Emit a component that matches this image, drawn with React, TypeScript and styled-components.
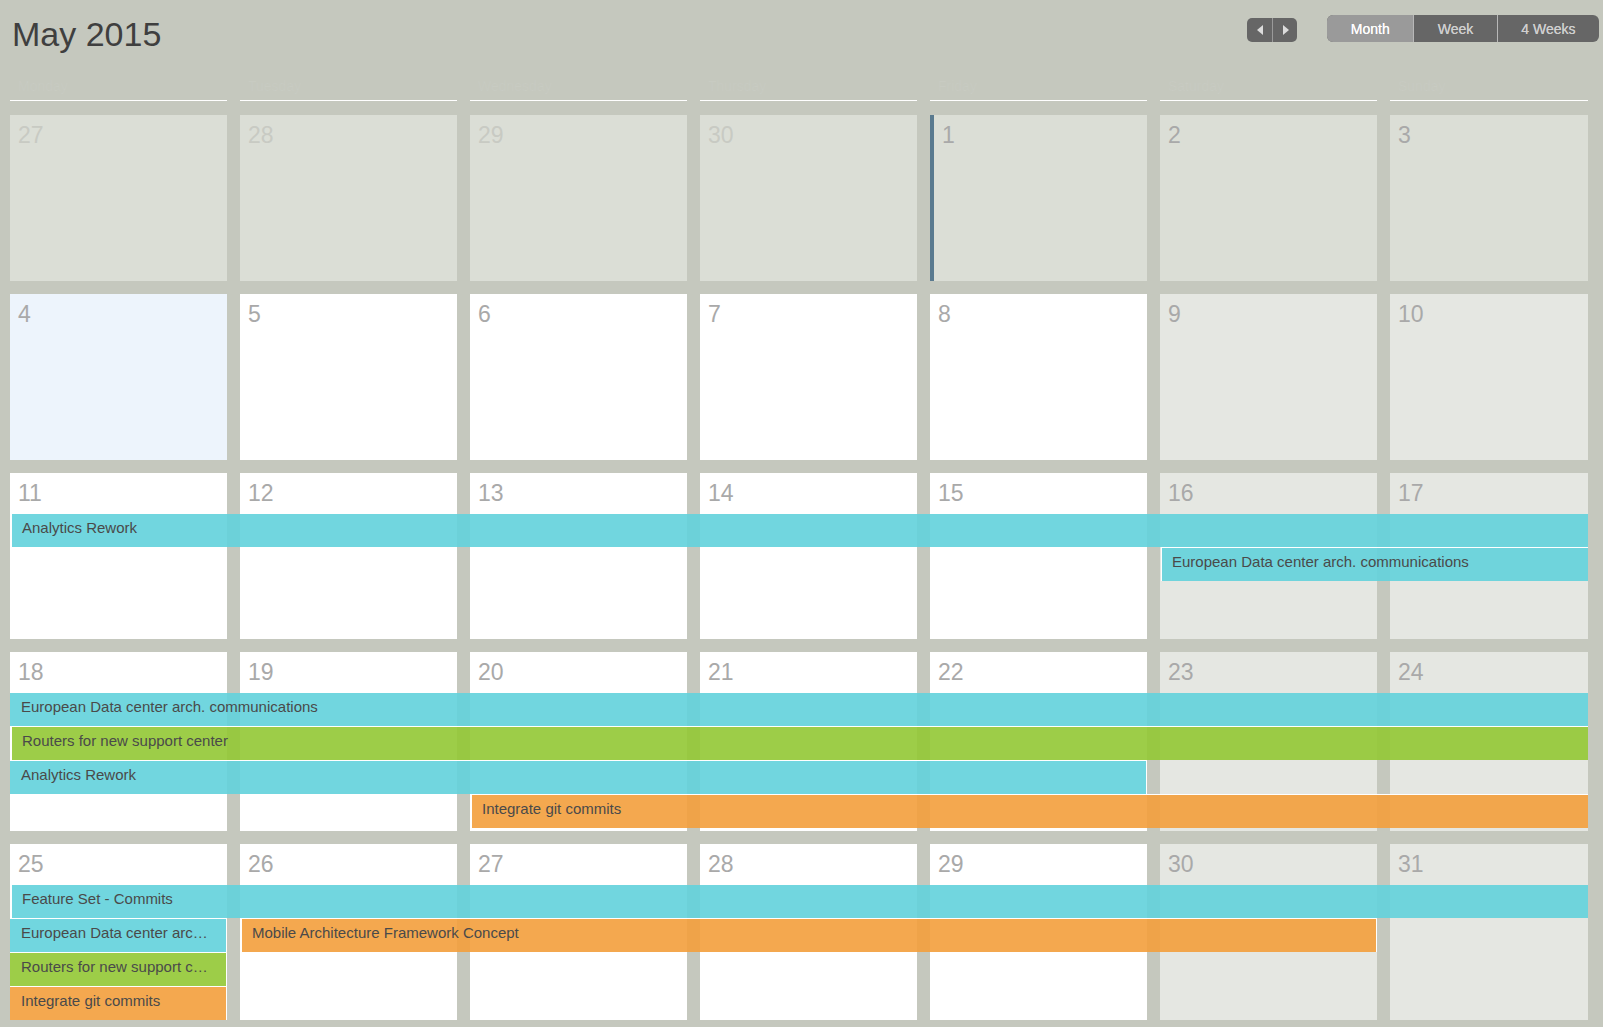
import React from 'react';
import styled, { createGlobalStyle, css } from 'styled-components';

const GlobalStyle = createGlobalStyle`
	body {
		margin: 0;
		background: #c5c8be;
		font-family: 'Liberation Sans', Arial, Helvetica, sans-serif;
	}
`;

const COLUMNS = 'repeat(6, 217px) 198px';

const Page = styled.div`
	padding: 0 4px 7px 10px;
`;

const TopBar = styled.div`
	display: flex;
	justify-content: space-between;
	align-items: flex-start;
	height: 62px;
`;

const Title = styled.h1`
	margin: 14px 0 0 2px;
	font-size: 34px;
	line-height: 40px;
	font-weight: normal;
	color: #3f3f3f;
`;

const Controls = styled.div`
	display: flex;
	align-items: flex-start;
	gap: 30px;
	margin-top: 15px;
`;

const NavGroup = styled.div`
	display: flex;
	margin-top: 3px;
	height: 24px;
	border-radius: 5px;
	overflow: hidden;
	background: #666;
`;

const NavButton = styled.button<{ $dir: 'left' | 'right' }>`
	width: 25px;
	height: 24px;
	padding: 0;
	border: 0;
	background: transparent;
	display: flex;
	align-items: center;
	justify-content: center;
	cursor: pointer;
	${(p) =>
		p.$dir === 'right' &&
		css`
			border-left: 1px solid #9a9a9a;
		`}

	&::before {
		content: '';
		width: 0;
		height: 0;
		border-top: 5px solid transparent;
		border-bottom: 5px solid transparent;
		${(p) =>
			p.$dir === 'left'
				? css`
						border-right: 6px solid #dcdcdc;
						margin-left: 1px;
				  `
				: css`
						border-left: 6px solid #dcdcdc;
						margin-left: 2px;
				  `}
	}
`;

const Switcher = styled.div`
	display: flex;
	height: 27px;
	border-radius: 6px;
	overflow: hidden;
	background: #666;
`;

const SwitchButton = styled.button<{ $active?: boolean }>`
	height: 27px;
	padding: 0 23.5px;
	border: 0;
	font-family: inherit;
	font-size: 14px;
	color: ${(p) => (p.$active ? '#fff' : '#cfcfcf')};
	background: ${(p) => (p.$active ? '#9a9a9a' : 'transparent')};
	text-shadow: 0 0 0.4px currentColor;
	cursor: pointer;

	& + & {
		border-left: 1px solid #b8b8b8;
	}
`;

const DayHeader = styled.div`
	display: grid;
	grid-template-columns: ${COLUMNS};
	column-gap: 13px;
	height: 39px;
`;

const DayName = styled.div`
	display: flex;
	align-items: flex-end;
	padding: 0 0 6px 8px;
	border-bottom: 1px solid #fff;
	font-size: 14px;
	color: rgba(255, 255, 255, 0.06);
`;

const Weeks = styled.div`
	display: flex;
	flex-direction: column;
	gap: 13px;
	margin-top: 14px;
`;

const WeekRow = styled.div<{ $height: number }>`
	position: relative;
	height: ${(p) => p.$height}px;
`;

const DaysGrid = styled.div`
	display: grid;
	grid-template-columns: ${COLUMNS};
	column-gap: 13px;
	height: 100%;
`;

type CellKind = 'past' | 'weekday' | 'weekend' | 'today';

const cellBackgrounds: Record<CellKind, string> = {
	past: '#dbded6',
	weekday: '#ffffff',
	weekend: '#e5e7e2',
	today: '#edf4fc',
};

const DayCell = styled.div<{ $kind: CellKind; $marked?: boolean }>`
	box-sizing: border-box;
	padding: 7px 0 0 8px;
	background: ${(p) => cellBackgrounds[p.$kind]};
	${(p) =>
		p.$marked &&
		css`
			border-left: 4px solid #5a7a8f;
		`}
`;

const DayNumber = styled.span<{ $faded?: boolean }>`
	display: block;
	font-size: 23px;
	line-height: 27px;
	color: ${(p) => (p.$faded ? '#c8cac3' : '#a9a9a9')};
`;

const EventLayer = styled.div`
	position: absolute;
	top: 40px;
	left: 0;
	right: 0;
	display: grid;
	grid-template-columns: ${COLUMNS};
	column-gap: 13px;
	grid-auto-rows: 34px;
`;

type Tone = 'cyan' | 'green' | 'orange';

const tones: Record<Tone, string> = {
	cyan: 'rgba(98, 210, 219, 0.9)',
	green: 'rgba(146, 200, 52, 0.9)',
	orange: 'rgba(243, 158, 60, 0.9)',
};

const EventBar = styled.div<{
	$tone: Tone;
	$from: number;
	$to: number;
	$lane: number;
	$starts?: boolean;
	$ends?: boolean;
}>`
	grid-column: ${(p) => `${p.$from + 1} / ${p.$to + 2}`};
	grid-row: ${(p) => p.$lane};
	box-sizing: border-box;
	height: 34px;
	min-width: 0;
	padding: 0 11px;
	border-top: 1px solid ${(p) => (p.$lane === 1 ? 'transparent' : '#fff')};
	background: ${(p) => tones[p.$tone]};
	background-clip: padding-box;
	font-size: 15px;
	line-height: 28px;
	color: #4a4a4a;
	white-space: nowrap;
	overflow: hidden;
	text-overflow: ellipsis;
	${(p) =>
		p.$starts &&
		css`
			margin-left: 1px;
			border-left: 1px solid #fff;
			padding-left: 10px;
		`}
	${(p) =>
		p.$ends &&
		css`
			border-right: 1px solid #fff;
		`}
`;

type CalEvent = {
	title: string;
	tone: Tone;
	from: number;
	to: number;
	lane: number;
	starts?: boolean;
	ends?: boolean;
};

type Day = { n: number; kind: CellKind; faded?: boolean; marked?: boolean };

type Week = { height: number; days: Day[]; events: CalEvent[] };

const dayNames = ['Monday', 'Tuesday', 'Wednesday', 'Thursday', 'Friday', 'Saturday', 'Sunday'];

const span = (start: number, weekendFrom = 5): Day[] =>
	Array.from({ length: 7 }, (_, i) => ({
		n: start + i,
		kind: i >= weekendFrom ? 'weekend' : 'weekday',
	}));

const weeks: Week[] = [
	{
		height: 166,
		days: [
			{ n: 27, kind: 'past', faded: true },
			{ n: 28, kind: 'past', faded: true },
			{ n: 29, kind: 'past', faded: true },
			{ n: 30, kind: 'past', faded: true },
			{ n: 1, kind: 'past', marked: true },
			{ n: 2, kind: 'past' },
			{ n: 3, kind: 'past' },
		],
		events: [],
	},
	{
		height: 166,
		days: span(4).map((d, i) => (i === 0 ? { ...d, kind: 'today' } : d)),
		events: [],
	},
	{
		height: 166,
		days: span(11),
		events: [
			{ title: 'Analytics Rework', tone: 'cyan', from: 0, to: 6, lane: 1, starts: true },
			{
				title: 'European Data center arch. communications',
				tone: 'cyan',
				from: 5,
				to: 6,
				lane: 2,
				starts: true,
			},
		],
	},
	{
		height: 179,
		days: span(18),
		events: [
			{ title: 'European Data center arch. communications', tone: 'cyan', from: 0, to: 6, lane: 1 },
			{ title: 'Routers for new support center', tone: 'green', from: 0, to: 6, lane: 2, starts: true },
			{ title: 'Analytics Rework', tone: 'cyan', from: 0, to: 4, lane: 3, ends: true },
			{ title: 'Integrate git commits', tone: 'orange', from: 2, to: 6, lane: 4, starts: true },
		],
	},
	{
		height: 176,
		days: span(25),
		events: [
			{ title: 'Feature Set - Commits', tone: 'cyan', from: 0, to: 6, lane: 1, starts: true },
			{ title: 'European Data center arch. communications', tone: 'cyan', from: 0, to: 0, lane: 2, ends: true },
			{ title: 'Routers for new support center', tone: 'green', from: 0, to: 0, lane: 3, ends: true },
			{ title: 'Integrate git commits', tone: 'orange', from: 0, to: 0, lane: 4, ends: true },
			{
				title: 'Mobile Architecture Framework Concept',
				tone: 'orange',
				from: 1,
				to: 5,
				lane: 2,
				starts: true,
				ends: true,
			},
		],
	},
];

const App: React.FC = (): React.ReactElement => {
	return (
		<Page>
			<GlobalStyle />
			<TopBar>
				<Title>May 2015</Title>
				<Controls>
					<NavGroup>
						<NavButton $dir="left" aria-label="Previous" />
						<NavButton $dir="right" aria-label="Next" />
					</NavGroup>
					<Switcher>
						<SwitchButton $active>Month</SwitchButton>
						<SwitchButton>Week</SwitchButton>
						<SwitchButton>4 Weeks</SwitchButton>
					</Switcher>
				</Controls>
			</TopBar>
			<DayHeader>
				{dayNames.map((name) => (
					<DayName key={name}>{name}</DayName>
				))}
			</DayHeader>
			<Weeks>
				{weeks.map((week, w) => (
					<WeekRow key={w} $height={week.height}>
						<DaysGrid>
							{week.days.map((day, i) => (
								<DayCell key={i} $kind={day.kind} $marked={day.marked}>
									<DayNumber $faded={day.faded}>{day.n}</DayNumber>
								</DayCell>
							))}
						</DaysGrid>
						{week.events.length > 0 && (
							<EventLayer>
								{week.events.map((ev, i) => (
									<EventBar
										key={i}
										$tone={ev.tone}
										$from={ev.from}
										$to={ev.to}
										$lane={ev.lane}
										$starts={ev.starts}
										$ends={ev.ends}
									>
										{ev.title}
									</EventBar>
								))}
							</EventLayer>
						)}
					</WeekRow>
				))}
			</Weeks>
		</Page>
	);
};

export default App;
